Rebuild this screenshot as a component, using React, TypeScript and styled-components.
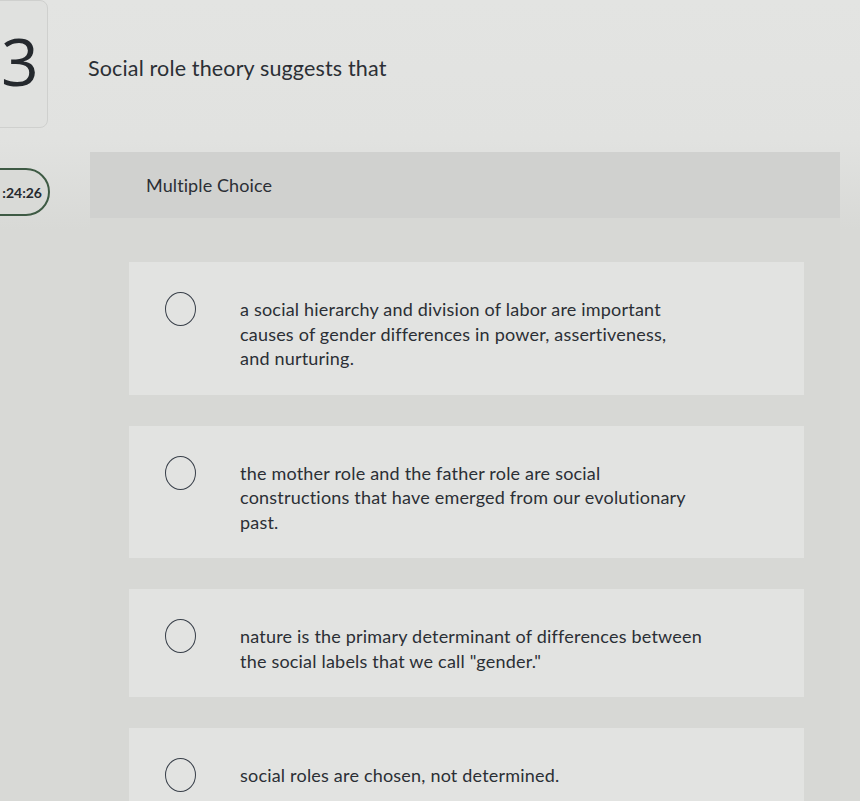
import React from "react";
import styled, { createGlobalStyle } from "styled-components";

const Global = createGlobalStyle`
  html, body { margin: 0; padding: 0; }
  body {
    width: 860px;
    height: 801px;
    overflow: hidden;
    background: #d8d9d6;
    font-family: Lato, "Open Sans", Arial, sans-serif;
    color: #2b2f35;
  }
`;

const Page = styled.div`
  display: grid;
  grid-template-columns: 90px 750px;
  grid-template-rows: 152px 1fr;
  width: 860px;
  height: 801px;
  background: linear-gradient(180deg, #e3e4e2 0px, #e1e2e0 140px, #d8d9d6 230px);
`;

const NumberBox = styled.div`
  margin-left: -12px;
  width: 60px;
  height: 128px;
  box-sizing: border-box;
  border: 1px solid #cfd0ce;
  border-radius: 8px;
  background: #e0e1df;
  display: flex;
  align-items: center;
  justify-content: flex-start;
`;

const Number = styled.span`
  font-family: "Open Sans", Lato, sans-serif;
  font-size: 66px;
  font-weight: 400;
  line-height: 1;
  color: #25292e;
  margin-left: 12px;
  margin-top: -8px;
`;

const Question = styled.div`
  font-size: 21.5px;
  letter-spacing: 0.15px;
  color: #2b2f35;
  padding-top: 55px;
  margin-left: -2px;
`;

const TimerCol = styled.div`
  padding-top: 16px;
`;

const Timer = styled.div`
  margin-left: -22px;
  width: 72px;
  height: 48px;
  box-sizing: border-box;
  border: 2px solid #3e5a44;
  border-radius: 24px;
  display: flex;
  align-items: center;
  justify-content: flex-end;
  padding-right: 6px;
  font-size: 14px;
  font-weight: 700;
  color: #25292e;
  background: #d9dad7;
`;

const Panel = styled.section`
  display: flex;
  flex-direction: column;
  background: #d7d8d5;
`;

const PanelHeader = styled.div`
  height: 66px;
  background: #d0d1cf;
  display: flex;
  align-items: center;
  padding-left: 56px;
  font-size: 18px;
  letter-spacing: 0.1px;
  color: #2b2f35;
`;

const Options = styled.div`
  display: flex;
  flex-direction: column;
  gap: 31px;
  padding: 44px 36px 0 39px;
`;

const Card = styled.label`
  display: flex;
  align-items: flex-start;
  gap: 44px;
  background: #e2e3e1;
  padding: 30px 20px 24px 36px;
  cursor: pointer;
`;

const Radio = styled.span`
  flex: none;
  width: 31px;
  height: 34px;
  box-sizing: border-box;
  border: 1.6px solid #39404a;
  border-radius: 50%;
`;

const OptionText = styled.span`
  margin-top: 5px;
  font-size: 18px;
  letter-spacing: 0.2px;
  line-height: 24.5px;
  color: #2b2f35;
`;

const options: string[][] = [
  [
    "a social hierarchy and division of labor are important",
    "causes of gender differences in power, assertiveness,",
    "and nurturing.",
  ],
  [
    "the mother role and the father role are social",
    "constructions that have emerged from our evolutionary",
    "past.",
  ],
  [
    "nature is the primary determinant of differences between",
    'the social labels that we call "gender."',
  ],
  ["social roles are chosen, not determined."],
];

export default function App() {
  return (
    <>
      <Global />
      <Page>
        <NumberBox>
          <Number>3</Number>
        </NumberBox>
        <Question>Social role theory suggests that</Question>
        <TimerCol>
          <Timer>:24:26</Timer>
        </TimerCol>
        <Panel>
          <PanelHeader>Multiple Choice</PanelHeader>
          <Options>
            {options.map((lines, i) => (
              <Card key={i}>
                <Radio />
                <OptionText>
                  {lines.map((l, j) => (
                    <React.Fragment key={j}>
                      {l}
                      {j < lines.length - 1 && <br />}
                    </React.Fragment>
                  ))}
                </OptionText>
              </Card>
            ))}
          </Options>
        </Panel>
      </Page>
    </>
  );
}
